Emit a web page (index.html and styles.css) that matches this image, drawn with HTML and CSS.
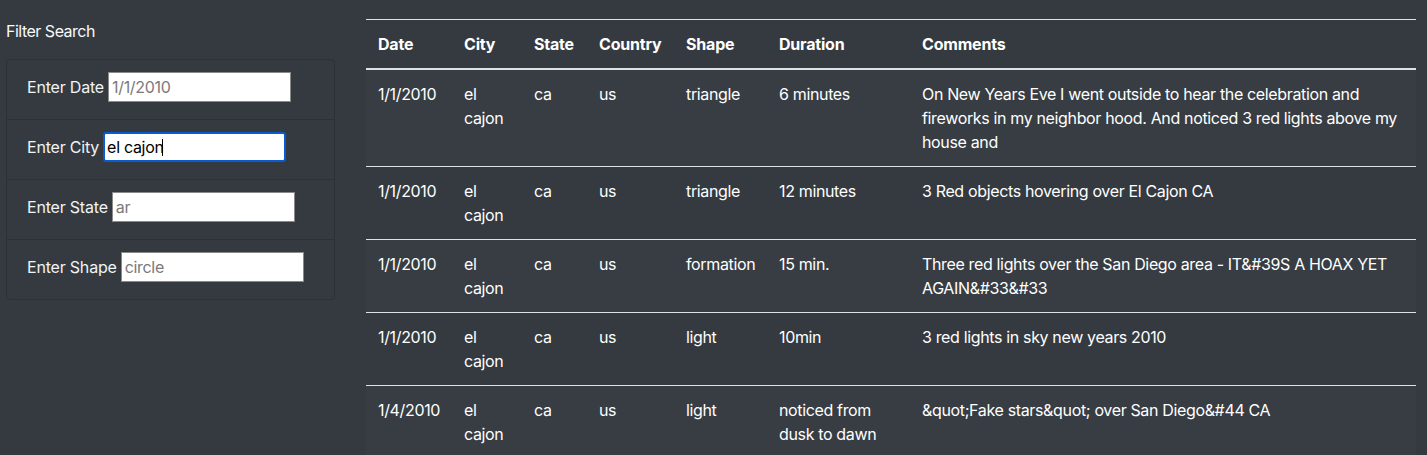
FILE: index.html
```html
<!DOCTYPE html>
<html lang="en">
<head>
<meta charset="utf-8">
<title>UFO Sightings</title>
<link rel="stylesheet" href="styles.css">
</head>
<body>
<div class="page">
  <aside class="sidebar">
    <h5 class="filter-title">Filter Search</h5>
    <ul class="filter-list">
      <li class="filter-item">
        <label class="filter-label" for="datetime">Enter Date</label>
        <input class="filter-input" id="datetime" type="text" placeholder="1/1/2010">
      </li>
      <li class="filter-item">
        <label class="filter-label" for="city">Enter City</label>
        <span class="input-wrap">
          <input class="filter-input focused" id="city" type="text" value="el cajon">
          <span class="caret"></span>
        </span>
      </li>
      <li class="filter-item">
        <label class="filter-label" for="state">Enter State</label>
        <input class="filter-input" id="state" type="text" placeholder="ar">
      </li>
      <li class="filter-item">
        <label class="filter-label" for="shape">Enter Shape</label>
        <input class="filter-input" id="shape" type="text" placeholder="circle">
      </li>
    </ul>
  </aside>
  <main class="content">
    <table class="ufo-table">
      <colgroup>
        <col class="c-date"><col class="c-city"><col class="c-state"><col class="c-country"><col class="c-shape"><col class="c-duration"><col class="c-comments">
      </colgroup>
      <thead>
        <tr>
          <th>Date</th><th>City</th><th>State</th><th>Country</th><th>Shape</th><th>Duration</th><th>Comments</th>
        </tr>
      </thead>
      <tbody>
        <tr>
          <td>1/1/2010</td><td>el cajon</td><td>ca</td><td>us</td><td>triangle</td><td>6 minutes</td>
          <td>On New Years Eve I went outside to hear the celebration and fireworks in my neighbor hood. And noticed 3 red lights above my house and</td>
        </tr>
        <tr>
          <td>1/1/2010</td><td>el cajon</td><td>ca</td><td>us</td><td>triangle</td><td>12 minutes</td>
          <td>3 Red objects hovering over El Cajon CA</td>
        </tr>
        <tr>
          <td>1/1/2010</td><td>el cajon</td><td>ca</td><td>us</td><td>formation</td><td>15 min.</td>
          <td>Three red lights over the San Diego area - IT&amp;#39S A HOAX YET AGAIN&amp;#33&amp;#33</td>
        </tr>
        <tr>
          <td>1/1/2010</td><td>el cajon</td><td>ca</td><td>us</td><td>light</td><td>10min</td>
          <td>3 red lights in sky new years 2010</td>
        </tr>
        <tr>
          <td>1/4/2010</td><td>el cajon</td><td>ca</td><td>us</td><td>light</td><td>noticed from dusk to dawn</td>
          <td>&amp;quot;Fake stars&amp;quot; over San Diego&amp;#44 CA</td>
        </tr>
      </tbody>
    </table>
  </main>
</div>
</body>
</html>
```
FILE: styles.css
```css
html, body {
  margin: 0;
  padding: 0;
  background: #343a40;
  color: #ffffff;
  font-family: Inter, "Noto Sans", "Liberation Sans", sans-serif;
  font-size: 16px;
  line-height: 24px;
  letter-spacing: -0.3px;
}

.page {
  display: flex;
  align-items: flex-start;
}

.sidebar {
  width: 360px;
  padding: 19px 0 0 6px;
  box-sizing: border-box;
}

.filter-title {
  margin: 0;
  font-size: 16px;
  font-weight: 400;
  line-height: 24px;
  color: #f8f9fa;
  letter-spacing: -0.5px;
}

.filter-list {
  list-style: none;
  margin: 16px 0 0 0;
  padding: 0;
  width: 329px;
  border: 1px solid #2c3137;
  border-radius: 4px;
  box-sizing: border-box;
}

.filter-item {
  display: flex;
  align-items: center;
  gap: 4px;
  height: 60px;
  padding: 12px 20px 17px 20px;
  box-sizing: border-box;
  border-bottom: 1px solid #2c3137;
}

.filter-item:last-child {
  border-bottom: none;
  height: 59px;
}

.filter-label {
  color: #f1f3f5;
  font-size: 16px;
  white-space: nowrap;
  letter-spacing: -0.2px;
}

.input-wrap {
  position: relative;
  display: inline-flex;
}

.filter-input {
  width: 183px;
  height: 30px;
  box-sizing: border-box;
  border: 1px solid #8a8a8a;
  border-radius: 0;
  background: #ffffff;
  padding: 1px 3px;
  font-family: Inter, "Noto Sans", "Liberation Sans", sans-serif;
  font-size: 16px;
  letter-spacing: -0.3px;
  color: #000000;
  outline: none;
}

.filter-input::placeholder {
  color: #7a7a7a;
}

.filter-input.focused {
  border: 2px solid #0a5ad0;
  border-radius: 3px;
  padding: 0 2px;
}

.caret {
  position: absolute;
  left: 59px;
  top: 7px;
  width: 1px;
  height: 17px;
  background: #000000;
}

.content {
  width: 1050px;
  margin-left: 6px;
  padding-top: 19px;
}

.ufo-table {
  width: 1050px;
  table-layout: fixed;
  border-collapse: collapse;
  color: #ffffff;
}

.c-date { width: 86px; }
.c-city { width: 70px; }
.c-state { width: 65px; }
.c-country { width: 87px; }
.c-shape { width: 93px; }
.c-duration { width: 143px; }
.c-comments { width: 506px; }

.ufo-table th,
.ufo-table td {
  padding: 12px;
  text-align: left;
  vertical-align: top;
  border-top: 1px solid #dee2e6;
}

.ufo-table th {
  font-weight: 700;
  letter-spacing: -0.2px;
  border-bottom: 2px solid #dee2e6;
}

.ufo-table td {
  letter-spacing: -0.35px;
}

.ufo-table tbody tr:nth-child(odd) {
  background: rgba(255, 255, 255, 0.02);
}
```
